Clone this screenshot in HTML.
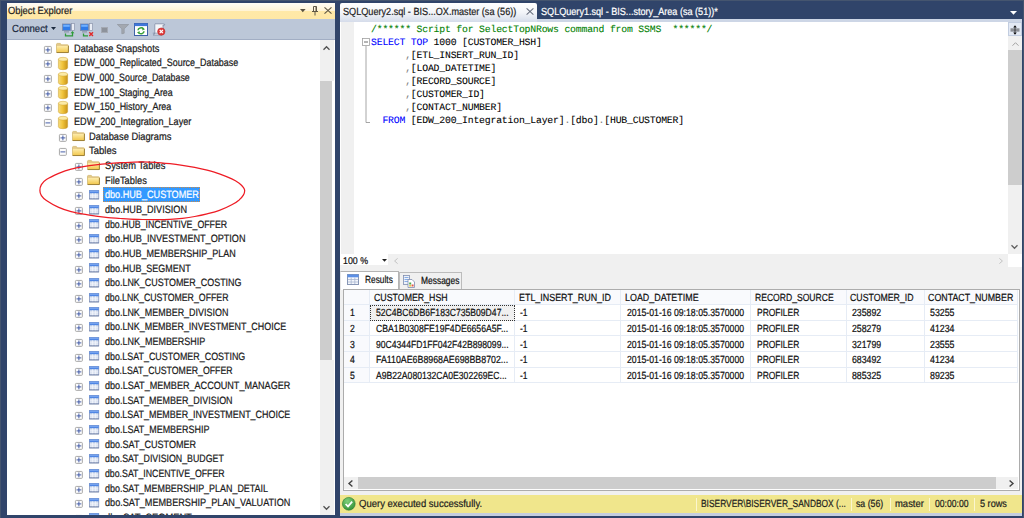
<!DOCTYPE html>
<html lang="en"><head><meta charset="utf-8"><title>Microsoft SQL Server Management Studio</title>
<style>
html,body{margin:0;padding:0}
body{width:1024px;height:518px;overflow:hidden;text-rendering:geometricPrecision;background:#30446a;position:relative;font-family:"Liberation Sans",sans-serif}
.abs,.tx{position:absolute}
.tx{-webkit-text-stroke:0.22px;white-space:nowrap;font-family:"Liberation Sans",sans-serif;transform-origin:0 50%}
.mono{font-family:"Liberation Mono",monospace;-webkit-text-stroke:0.08px}
div{box-sizing:border-box}
svg{display:block;overflow:visible}
.kw{color:#0000ff}.gr{color:#808080}.cm{color:#008000}
</style></head><body>

<div class="abs" style="left:0.00px;top:0.00px;width:1024.00px;height:1.20px;background:#45556f"></div>
<div class="abs" style="left:0.00px;top:0.00px;width:1.00px;height:518.00px;background:#44546e"></div>
<div class="abs" style="left:1023.00px;top:0.00px;width:1.00px;height:518.00px;background:#44546e"></div>
<div id="object-explorer">
<div class="abs" style="left:6.50px;top:3.00px;width:328.00px;height:511.80px;background:#fff"></div>
<div class="abs" style="left:6.50px;top:3.00px;width:328.00px;height:15.50px;background:linear-gradient(#fffdf6 0%,#fff4d6 47%,#ffe9a8 50%,#ffe8a6 100%)"></div>
<div class="abs" style="left:6.50px;top:18.50px;width:328.00px;height:21.30px;background:#bcc7d8;border-bottom:1px solid #a2aec4"></div>
<span id="t1" class="tx" style="left:8.10px;top:5px;font-size:10.4px;line-height:14px;color:#1e1e1e;transform:scaleX(0.8993);">Object Explorer</span>
<svg class="abs" style="left:299.5px;top:8.6px" width="5.6" height="3.4" viewBox="0 0 7 4"><path d="M0 0H7L3.5 4Z" fill="#5a5240"/></svg>
<svg class="abs" style="left:311px;top:6px" width="8" height="10" viewBox="0 0 8 10"><path d="M2.5 0.5H5.5V5.5H2.5ZM1 5.5H7M4 5.5V9.5" fill="none" stroke="#5f5745" stroke-width="1"/><path d="M5 0.5V5.5" stroke="#5f5745" stroke-width="1"/></svg>
<svg class="abs" style="left:323.7px;top:7px" width="8" height="7" viewBox="0 0 8 7"><path d="M0.5 0.3L7.5 6.7M7.5 0.3L0.5 6.7" stroke="#5f5745" stroke-width="1.1"/></svg>
<span id="t2" class="tx" style="left:11.90px;top:23px;font-size:10.4px;line-height:14px;color:#1b293e;transform:scaleX(0.9198);">Connect</span>
<svg class="abs" style="left:51px;top:27px" width="5" height="3" viewBox="0 0 5 3"><path d="M0 0H5L2.5 3Z" fill="#1b293e"/></svg>
<svg class="abs" style="left:62px;top:22.5px" width="14" height="14" viewBox="0 0 14 14"><rect x="0.5" y="1" width="8" height="6.5" fill="#2f7be8" stroke="#7c8aa8" stroke-width="0.8"/><rect x="1.3" y="1.8" width="6.4" height="2" fill="#6fb0ff"/><rect x="2" y="8.3" width="5" height="1.2" fill="#8b95aa"/><rect x="9.5" y="0.5" width="3" height="7" fill="#e9edf5" stroke="#8a94ab" stroke-width="0.7"/><path d="M3.5 10.5V12.8H10.5V9.5" fill="none" stroke="#2e9a3a" stroke-width="1.3"/><path d="M8.6 10.2L10.5 8L12.4 10.2Z" fill="#2e9a3a"/></svg>
<svg class="abs" style="left:80.3px;top:22.5px" width="14" height="14" viewBox="0 0 14 14"><rect x="0.5" y="1" width="8" height="6.5" fill="#2f7be8" stroke="#7c8aa8" stroke-width="0.8"/><rect x="1.3" y="1.8" width="6.4" height="2" fill="#6fb0ff"/><rect x="2" y="8.3" width="5" height="1.2" fill="#8b95aa"/><rect x="9.5" y="0.5" width="3" height="7" fill="#e9edf5" stroke="#8a94ab" stroke-width="0.7"/><path d="M3.5 10.5V12.8H8" fill="none" stroke="#2e9a3a" stroke-width="1.3"/><path d="M9.3 9.3L13 13M13 9.3L9.3 13" stroke="#e02a2a" stroke-width="1.4"/></svg>
<div class="abs" style="left:101.00px;top:26.60px;width:7.00px;height:6.40px;background:#8d929b;border:1px solid #a4a9b3"></div>
<svg class="abs" style="left:117px;top:24px" width="12" height="10" viewBox="0 0 12 10"><path d="M0.3 0.5H11.7L7.2 4.8V9.2L4.8 9.8V4.8Z" fill="#a3a8b0" stroke="#8c9199" stroke-width="0.6"/></svg>
<svg class="abs" style="left:133.7px;top:22.8px" width="14" height="13" viewBox="0 0 14 13"><rect x="0.5" y="0.5" width="13" height="12" fill="#fff" stroke="#3e62a8" stroke-width="1"/><rect x="0.5" y="0.5" width="13" height="2.6" fill="#3f77d9"/><path d="M4 7.3A3 2.6 0 0 1 9.5 6" fill="none" stroke="#3ba13a" stroke-width="1.5"/><path d="M8.3 4.3L11 6.2L8.4 7.6Z" fill="#3ba13a"/><path d="M10 8.2A3 2.6 0 0 1 4.5 9.6" fill="none" stroke="#3ba13a" stroke-width="1.5"/><path d="M5.7 11.3L3 9.4L5.6 8Z" fill="#3ba13a"/></svg>
<svg class="abs" style="left:152px;top:22.8px" width="14" height="13" viewBox="0 0 14 13"><path d="M3 0.8H11.5Q12.8 0.8 12.8 2H11V10.5Q11 12 9.5 12H1.2Q2.8 11.6 2.8 10V1.5Z" fill="#f4f6fa" stroke="#7f8aa3" stroke-width="0.8"/><path d="M0.8 10.2H8.5" stroke="#7f8aa3" stroke-width="0.8"/><circle cx="9.3" cy="8.6" r="3.7" fill="#e13b3b" stroke="#b32020" stroke-width="0.5"/><path d="M7.7 7L10.9 10.2M10.9 7L7.7 10.2" stroke="#fff" stroke-width="1.2"/></svg>
<div class="abs" style="left:320.30px;top:39.80px;width:13.70px;height:475.00px;background:#f0f0f0"></div>
<div class="abs" style="left:320.30px;top:81.40px;width:13.70px;height:278.60px;background:#fff"></div>
<div class="abs" style="left:320.30px;top:81.40px;width:12.10px;height:278.60px;background:#cdcdcd"></div>
<svg class="abs" style="left:323.3px;top:46.2px" width="7" height="4" viewBox="0 0 7 4"><path d="M0.5 3.7L3.5 0.7L6.5 3.7" fill="none" stroke="#505050" stroke-width="1.3"/></svg>
<svg class="abs" style="left:323.3px;top:506.3px" width="7" height="4" viewBox="0 0 7 4"><path d="M0.5 0.3L3.5 3.3L6.5 0.3" fill="none" stroke="#505050" stroke-width="1.3"/></svg>
<svg width="0" height="0" style="position:absolute"><defs><linearGradient id="cyl" x1="0" x2="1"><stop offset="0" stop-color="#f7dc7a"/><stop offset=".45" stop-color="#f0c43c"/><stop offset="1" stop-color="#c99418"/></linearGradient><linearGradient id="fld" x1="0" x2="0" y1="0" y2="1"><stop offset="0" stop-color="#fdecab"/><stop offset="1" stop-color="#f2c84f"/></linearGradient></defs></svg>
<div id="tree">
<svg class="abs" style="left:43.90px;top:45.70px" width="7.8" height="7.8" viewBox="0 0 9 9"><rect x="0.5" y="0.5" width="8" height="8" rx="1" fill="#fcfcfc" stroke="#9b9b9b"/><path d="M1.7 4.5h5.6" stroke="#3550a0" stroke-width="1.05"/><path d="M4.5 1.7v5.6" stroke="#3550a0" stroke-width="1.05"/></svg>
<svg class="abs" style="left:56.30px;top:43.20px" width="13" height="10" viewBox="0 0 13 10"><path d="M0.5 1.3 Q0.5 0.4 1.5 0.4 H4.3 L5.3 1.8 H11.5 Q12.5 1.8 12.5 2.8 V9 Q12.5 9.6 12 9.6 H1 Q0.5 9.6 0.5 9 Z" fill="#e3c98a" stroke="#c9ab55" stroke-width="0.6"/><path d="M0.9 2.9 H12 V9.2 H0.9 Z" fill="url(#fld)"/><path d="M0.6 9.5H12.4V3" fill="none" stroke="#8d6f24" stroke-width="0.9" opacity=".85"/></svg>
<span id="t3" class="tx" style="left:73.70px;top:42px;font-size:10.6px;line-height:14px;color:#1a1a1a;transform:scaleX(0.8672);">Database Snapshots</span>
<svg class="abs" style="left:43.90px;top:60.36px" width="7.8" height="7.8" viewBox="0 0 9 9"><rect x="0.5" y="0.5" width="8" height="8" rx="1" fill="#fcfcfc" stroke="#9b9b9b"/><path d="M1.7 4.5h5.6" stroke="#3550a0" stroke-width="1.05"/><path d="M4.5 1.7v5.6" stroke="#3550a0" stroke-width="1.05"/></svg>
<svg class="abs" style="left:58.00px;top:56.86px" width="10" height="13" viewBox="0 0 10 13"><path d="M0.4 2.2 V10.8 A4.6 1.9 0 0 0 9.6 10.8 V2.2 Z" fill="url(#cyl)" stroke="#c79a2a" stroke-width="0.5"/><ellipse cx="5" cy="2.2" rx="4.6" ry="1.9" fill="#fbeaa6" stroke="#d2a93a" stroke-width="0.5"/></svg>
<span id="t4" class="tx" style="left:73.70px;top:56px;font-size:10.6px;line-height:14px;color:#1a1a1a;transform:scaleX(0.8423);">EDW_000_Replicated_Source_Database</span>
<svg class="abs" style="left:43.90px;top:75.02px" width="7.8" height="7.8" viewBox="0 0 9 9"><rect x="0.5" y="0.5" width="8" height="8" rx="1" fill="#fcfcfc" stroke="#9b9b9b"/><path d="M1.7 4.5h5.6" stroke="#3550a0" stroke-width="1.05"/><path d="M4.5 1.7v5.6" stroke="#3550a0" stroke-width="1.05"/></svg>
<svg class="abs" style="left:58.00px;top:71.52px" width="10" height="13" viewBox="0 0 10 13"><path d="M0.4 2.2 V10.8 A4.6 1.9 0 0 0 9.6 10.8 V2.2 Z" fill="url(#cyl)" stroke="#c79a2a" stroke-width="0.5"/><ellipse cx="5" cy="2.2" rx="4.6" ry="1.9" fill="#fbeaa6" stroke="#d2a93a" stroke-width="0.5"/></svg>
<span id="t5" class="tx" style="left:73.70px;top:71px;font-size:10.6px;line-height:14px;color:#1a1a1a;transform:scaleX(0.8325);">EDW_000_Source_Database</span>
<svg class="abs" style="left:43.90px;top:89.68px" width="7.8" height="7.8" viewBox="0 0 9 9"><rect x="0.5" y="0.5" width="8" height="8" rx="1" fill="#fcfcfc" stroke="#9b9b9b"/><path d="M1.7 4.5h5.6" stroke="#3550a0" stroke-width="1.05"/><path d="M4.5 1.7v5.6" stroke="#3550a0" stroke-width="1.05"/></svg>
<svg class="abs" style="left:58.00px;top:86.18px" width="10" height="13" viewBox="0 0 10 13"><path d="M0.4 2.2 V10.8 A4.6 1.9 0 0 0 9.6 10.8 V2.2 Z" fill="url(#cyl)" stroke="#c79a2a" stroke-width="0.5"/><ellipse cx="5" cy="2.2" rx="4.6" ry="1.9" fill="#fbeaa6" stroke="#d2a93a" stroke-width="0.5"/></svg>
<span id="t6" class="tx" style="left:73.70px;top:86px;font-size:10.6px;line-height:14px;color:#1a1a1a;transform:scaleX(0.8338);">EDW_100_Staging_Area</span>
<svg class="abs" style="left:43.90px;top:104.34px" width="7.8" height="7.8" viewBox="0 0 9 9"><rect x="0.5" y="0.5" width="8" height="8" rx="1" fill="#fcfcfc" stroke="#9b9b9b"/><path d="M1.7 4.5h5.6" stroke="#3550a0" stroke-width="1.05"/><path d="M4.5 1.7v5.6" stroke="#3550a0" stroke-width="1.05"/></svg>
<svg class="abs" style="left:58.00px;top:100.84px" width="10" height="13" viewBox="0 0 10 13"><path d="M0.4 2.2 V10.8 A4.6 1.9 0 0 0 9.6 10.8 V2.2 Z" fill="url(#cyl)" stroke="#c79a2a" stroke-width="0.5"/><ellipse cx="5" cy="2.2" rx="4.6" ry="1.9" fill="#fbeaa6" stroke="#d2a93a" stroke-width="0.5"/></svg>
<span id="t7" class="tx" style="left:73.70px;top:100px;font-size:10.6px;line-height:14px;color:#1a1a1a;transform:scaleX(0.8431);">EDW_150_History_Area</span>
<svg class="abs" style="left:43.90px;top:119.00px" width="7.8" height="7.8" viewBox="0 0 9 9"><rect x="0.5" y="0.5" width="8" height="8" rx="1" fill="#fcfcfc" stroke="#9b9b9b"/><path d="M1.7 4.5h5.6" stroke="#3550a0" stroke-width="1.05"/></svg>
<svg class="abs" style="left:58.00px;top:115.50px" width="10" height="13" viewBox="0 0 10 13"><path d="M0.4 2.2 V10.8 A4.6 1.9 0 0 0 9.6 10.8 V2.2 Z" fill="url(#cyl)" stroke="#c79a2a" stroke-width="0.5"/><ellipse cx="5" cy="2.2" rx="4.6" ry="1.9" fill="#fbeaa6" stroke="#d2a93a" stroke-width="0.5"/></svg>
<span id="t8" class="tx" style="left:73.70px;top:115px;font-size:10.6px;line-height:14px;color:#1a1a1a;transform:scaleX(0.8585);">EDW_200_Integration_Layer</span>
<svg class="abs" style="left:59.30px;top:133.66px" width="7.8" height="7.8" viewBox="0 0 9 9"><rect x="0.5" y="0.5" width="8" height="8" rx="1" fill="#fcfcfc" stroke="#9b9b9b"/><path d="M1.7 4.5h5.6" stroke="#3550a0" stroke-width="1.05"/><path d="M4.5 1.7v5.6" stroke="#3550a0" stroke-width="1.05"/></svg>
<svg class="abs" style="left:71.70px;top:131.16px" width="13" height="10" viewBox="0 0 13 10"><path d="M0.5 1.3 Q0.5 0.4 1.5 0.4 H4.3 L5.3 1.8 H11.5 Q12.5 1.8 12.5 2.8 V9 Q12.5 9.6 12 9.6 H1 Q0.5 9.6 0.5 9 Z" fill="#e3c98a" stroke="#c9ab55" stroke-width="0.6"/><path d="M0.9 2.9 H12 V9.2 H0.9 Z" fill="url(#fld)"/><path d="M0.6 9.5H12.4V3" fill="none" stroke="#8d6f24" stroke-width="0.9" opacity=".85"/></svg>
<span id="t9" class="tx" style="left:89.10px;top:130px;font-size:10.6px;line-height:14px;color:#1a1a1a;transform:scaleX(0.8790);">Database Diagrams</span>
<svg class="abs" style="left:59.30px;top:148.32px" width="7.8" height="7.8" viewBox="0 0 9 9"><rect x="0.5" y="0.5" width="8" height="8" rx="1" fill="#fcfcfc" stroke="#9b9b9b"/><path d="M1.7 4.5h5.6" stroke="#3550a0" stroke-width="1.05"/></svg>
<svg class="abs" style="left:71.70px;top:145.82px" width="13" height="10" viewBox="0 0 13 10"><path d="M0.5 1.3 Q0.5 0.4 1.5 0.4 H4.3 L5.3 1.8 H11.5 Q12.5 1.8 12.5 2.8 V9 Q12.5 9.6 12 9.6 H1 Q0.5 9.6 0.5 9 Z" fill="#e3c98a" stroke="#c9ab55" stroke-width="0.6"/><path d="M0.9 2.9 H12 V9.2 H0.9 Z" fill="url(#fld)"/><path d="M0.6 9.5H12.4V3" fill="none" stroke="#8d6f24" stroke-width="0.9" opacity=".85"/></svg>
<span id="t10" class="tx" style="left:89.10px;top:144px;font-size:10.6px;line-height:14px;color:#1a1a1a;transform:scaleX(0.8980);">Tables</span>
<svg class="abs" style="left:74.70px;top:162.98px" width="7.8" height="7.8" viewBox="0 0 9 9"><rect x="0.5" y="0.5" width="8" height="8" rx="1" fill="#fcfcfc" stroke="#9b9b9b"/><path d="M1.7 4.5h5.6" stroke="#3550a0" stroke-width="1.05"/><path d="M4.5 1.7v5.6" stroke="#3550a0" stroke-width="1.05"/></svg>
<svg class="abs" style="left:87.10px;top:160.48px" width="13" height="10" viewBox="0 0 13 10"><path d="M0.5 1.3 Q0.5 0.4 1.5 0.4 H4.3 L5.3 1.8 H11.5 Q12.5 1.8 12.5 2.8 V9 Q12.5 9.6 12 9.6 H1 Q0.5 9.6 0.5 9 Z" fill="#e3c98a" stroke="#c9ab55" stroke-width="0.6"/><path d="M0.9 2.9 H12 V9.2 H0.9 Z" fill="url(#fld)"/><path d="M0.6 9.5H12.4V3" fill="none" stroke="#8d6f24" stroke-width="0.9" opacity=".85"/></svg>
<span id="t11" class="tx" style="left:104.70px;top:159px;font-size:10.6px;line-height:14px;color:#1a1a1a;transform:scaleX(0.8777);">System Tables</span>
<svg class="abs" style="left:74.70px;top:177.64px" width="7.8" height="7.8" viewBox="0 0 9 9"><rect x="0.5" y="0.5" width="8" height="8" rx="1" fill="#fcfcfc" stroke="#9b9b9b"/><path d="M1.7 4.5h5.6" stroke="#3550a0" stroke-width="1.05"/><path d="M4.5 1.7v5.6" stroke="#3550a0" stroke-width="1.05"/></svg>
<svg class="abs" style="left:87.10px;top:175.14px" width="13" height="10" viewBox="0 0 13 10"><path d="M0.5 1.3 Q0.5 0.4 1.5 0.4 H4.3 L5.3 1.8 H11.5 Q12.5 1.8 12.5 2.8 V9 Q12.5 9.6 12 9.6 H1 Q0.5 9.6 0.5 9 Z" fill="#e3c98a" stroke="#c9ab55" stroke-width="0.6"/><path d="M0.9 2.9 H12 V9.2 H0.9 Z" fill="url(#fld)"/><path d="M0.6 9.5H12.4V3" fill="none" stroke="#8d6f24" stroke-width="0.9" opacity=".85"/></svg>
<span id="t12" class="tx" style="left:104.70px;top:174px;font-size:10.6px;line-height:14px;color:#1a1a1a;transform:scaleX(0.8763);">FileTables</span>
<svg class="abs" style="left:74.70px;top:192.30px" width="7.8" height="7.8" viewBox="0 0 9 9"><rect x="0.5" y="0.5" width="8" height="8" rx="1" fill="#fcfcfc" stroke="#9b9b9b"/><path d="M1.7 4.5h5.6" stroke="#3550a0" stroke-width="1.05"/><path d="M4.5 1.7v5.6" stroke="#3550a0" stroke-width="1.05"/></svg>
<svg class="abs" style="left:89.00px;top:190.00px" width="10.2" height="9.3" viewBox="0 0 11 10"><rect x="0.5" y="0.5" width="10" height="9" fill="#d3dcec" stroke="#8798bd" stroke-width="0.9"/><rect x="0.5" y="0.5" width="10" height="3" fill="#4f86e4"/><rect x="0.8" y="0.8" width="9.4" height="1.2" fill="#7ba7f0"/><path d="M1 5.6H10M1 7.6H10M3.8 3.6V9M7.1 3.6V9" stroke="#f4f7fc" stroke-width="0.8"/><path d="M0.3 9.7H10.7" stroke="#6f7fa3" stroke-width="0.8"/></svg>
<div class="abs" style="left:103.30px;top:187.00px;width:96.40px;height:14.60px;background:#3399ff;border:1px dotted #c98a4a"></div>
<span id="t13" class="tx" style="left:104.70px;top:188px;font-size:10.6px;line-height:14px;color:#fff;transform:scaleX(0.8590);">dbo.HUB_CUSTOMER</span>
<svg class="abs" style="left:74.70px;top:206.96px" width="7.8" height="7.8" viewBox="0 0 9 9"><rect x="0.5" y="0.5" width="8" height="8" rx="1" fill="#fcfcfc" stroke="#9b9b9b"/><path d="M1.7 4.5h5.6" stroke="#3550a0" stroke-width="1.05"/><path d="M4.5 1.7v5.6" stroke="#3550a0" stroke-width="1.05"/></svg>
<svg class="abs" style="left:89.00px;top:204.66px" width="10.2" height="9.3" viewBox="0 0 11 10"><rect x="0.5" y="0.5" width="10" height="9" fill="#d3dcec" stroke="#8798bd" stroke-width="0.9"/><rect x="0.5" y="0.5" width="10" height="3" fill="#4f86e4"/><rect x="0.8" y="0.8" width="9.4" height="1.2" fill="#7ba7f0"/><path d="M1 5.6H10M1 7.6H10M3.8 3.6V9M7.1 3.6V9" stroke="#f4f7fc" stroke-width="0.8"/><path d="M0.3 9.7H10.7" stroke="#6f7fa3" stroke-width="0.8"/></svg>
<span id="t14" class="tx" style="left:104.70px;top:203px;font-size:10.6px;line-height:14px;color:#1a1a1a;transform:scaleX(0.8596);">dbo.HUB_DIVISION</span>
<svg class="abs" style="left:74.70px;top:221.62px" width="7.8" height="7.8" viewBox="0 0 9 9"><rect x="0.5" y="0.5" width="8" height="8" rx="1" fill="#fcfcfc" stroke="#9b9b9b"/><path d="M1.7 4.5h5.6" stroke="#3550a0" stroke-width="1.05"/><path d="M4.5 1.7v5.6" stroke="#3550a0" stroke-width="1.05"/></svg>
<svg class="abs" style="left:89.00px;top:219.32px" width="10.2" height="9.3" viewBox="0 0 11 10"><rect x="0.5" y="0.5" width="10" height="9" fill="#d3dcec" stroke="#8798bd" stroke-width="0.9"/><rect x="0.5" y="0.5" width="10" height="3" fill="#4f86e4"/><rect x="0.8" y="0.8" width="9.4" height="1.2" fill="#7ba7f0"/><path d="M1 5.6H10M1 7.6H10M3.8 3.6V9M7.1 3.6V9" stroke="#f4f7fc" stroke-width="0.8"/><path d="M0.3 9.7H10.7" stroke="#6f7fa3" stroke-width="0.8"/></svg>
<span id="t15" class="tx" style="left:104.70px;top:218px;font-size:10.6px;line-height:14px;color:#1a1a1a;transform:scaleX(0.8302);">dbo.HUB_INCENTIVE_OFFER</span>
<svg class="abs" style="left:74.70px;top:236.28px" width="7.8" height="7.8" viewBox="0 0 9 9"><rect x="0.5" y="0.5" width="8" height="8" rx="1" fill="#fcfcfc" stroke="#9b9b9b"/><path d="M1.7 4.5h5.6" stroke="#3550a0" stroke-width="1.05"/><path d="M4.5 1.7v5.6" stroke="#3550a0" stroke-width="1.05"/></svg>
<svg class="abs" style="left:89.00px;top:233.98px" width="10.2" height="9.3" viewBox="0 0 11 10"><rect x="0.5" y="0.5" width="10" height="9" fill="#d3dcec" stroke="#8798bd" stroke-width="0.9"/><rect x="0.5" y="0.5" width="10" height="3" fill="#4f86e4"/><rect x="0.8" y="0.8" width="9.4" height="1.2" fill="#7ba7f0"/><path d="M1 5.6H10M1 7.6H10M3.8 3.6V9M7.1 3.6V9" stroke="#f4f7fc" stroke-width="0.8"/><path d="M0.3 9.7H10.7" stroke="#6f7fa3" stroke-width="0.8"/></svg>
<span id="t16" class="tx" style="left:104.70px;top:232px;font-size:10.6px;line-height:14px;color:#1a1a1a;transform:scaleX(0.8585);">dbo.HUB_INVESTMENT_OPTION</span>
<svg class="abs" style="left:74.70px;top:250.94px" width="7.8" height="7.8" viewBox="0 0 9 9"><rect x="0.5" y="0.5" width="8" height="8" rx="1" fill="#fcfcfc" stroke="#9b9b9b"/><path d="M1.7 4.5h5.6" stroke="#3550a0" stroke-width="1.05"/><path d="M4.5 1.7v5.6" stroke="#3550a0" stroke-width="1.05"/></svg>
<svg class="abs" style="left:89.00px;top:248.64px" width="10.2" height="9.3" viewBox="0 0 11 10"><rect x="0.5" y="0.5" width="10" height="9" fill="#d3dcec" stroke="#8798bd" stroke-width="0.9"/><rect x="0.5" y="0.5" width="10" height="3" fill="#4f86e4"/><rect x="0.8" y="0.8" width="9.4" height="1.2" fill="#7ba7f0"/><path d="M1 5.6H10M1 7.6H10M3.8 3.6V9M7.1 3.6V9" stroke="#f4f7fc" stroke-width="0.8"/><path d="M0.3 9.7H10.7" stroke="#6f7fa3" stroke-width="0.8"/></svg>
<span id="t17" class="tx" style="left:104.70px;top:247px;font-size:10.6px;line-height:14px;color:#1a1a1a;transform:scaleX(0.8512);">dbo.HUB_MEMBERSHIP_PLAN</span>
<svg class="abs" style="left:74.70px;top:265.60px" width="7.8" height="7.8" viewBox="0 0 9 9"><rect x="0.5" y="0.5" width="8" height="8" rx="1" fill="#fcfcfc" stroke="#9b9b9b"/><path d="M1.7 4.5h5.6" stroke="#3550a0" stroke-width="1.05"/><path d="M4.5 1.7v5.6" stroke="#3550a0" stroke-width="1.05"/></svg>
<svg class="abs" style="left:89.00px;top:263.30px" width="10.2" height="9.3" viewBox="0 0 11 10"><rect x="0.5" y="0.5" width="10" height="9" fill="#d3dcec" stroke="#8798bd" stroke-width="0.9"/><rect x="0.5" y="0.5" width="10" height="3" fill="#4f86e4"/><rect x="0.8" y="0.8" width="9.4" height="1.2" fill="#7ba7f0"/><path d="M1 5.6H10M1 7.6H10M3.8 3.6V9M7.1 3.6V9" stroke="#f4f7fc" stroke-width="0.8"/><path d="M0.3 9.7H10.7" stroke="#6f7fa3" stroke-width="0.8"/></svg>
<span id="t18" class="tx" style="left:104.70px;top:262px;font-size:10.6px;line-height:14px;color:#1a1a1a;transform:scaleX(0.8463);">dbo.HUB_SEGMENT</span>
<svg class="abs" style="left:74.70px;top:280.26px" width="7.8" height="7.8" viewBox="0 0 9 9"><rect x="0.5" y="0.5" width="8" height="8" rx="1" fill="#fcfcfc" stroke="#9b9b9b"/><path d="M1.7 4.5h5.6" stroke="#3550a0" stroke-width="1.05"/><path d="M4.5 1.7v5.6" stroke="#3550a0" stroke-width="1.05"/></svg>
<svg class="abs" style="left:89.00px;top:277.96px" width="10.2" height="9.3" viewBox="0 0 11 10"><rect x="0.5" y="0.5" width="10" height="9" fill="#d3dcec" stroke="#8798bd" stroke-width="0.9"/><rect x="0.5" y="0.5" width="10" height="3" fill="#4f86e4"/><rect x="0.8" y="0.8" width="9.4" height="1.2" fill="#7ba7f0"/><path d="M1 5.6H10M1 7.6H10M3.8 3.6V9M7.1 3.6V9" stroke="#f4f7fc" stroke-width="0.8"/><path d="M0.3 9.7H10.7" stroke="#6f7fa3" stroke-width="0.8"/></svg>
<span id="t19" class="tx" style="left:104.70px;top:276px;font-size:10.6px;line-height:14px;color:#1a1a1a;transform:scaleX(0.8441);">dbo.LNK_CUSTOMER_COSTING</span>
<svg class="abs" style="left:74.70px;top:294.92px" width="7.8" height="7.8" viewBox="0 0 9 9"><rect x="0.5" y="0.5" width="8" height="8" rx="1" fill="#fcfcfc" stroke="#9b9b9b"/><path d="M1.7 4.5h5.6" stroke="#3550a0" stroke-width="1.05"/><path d="M4.5 1.7v5.6" stroke="#3550a0" stroke-width="1.05"/></svg>
<svg class="abs" style="left:89.00px;top:292.62px" width="10.2" height="9.3" viewBox="0 0 11 10"><rect x="0.5" y="0.5" width="10" height="9" fill="#d3dcec" stroke="#8798bd" stroke-width="0.9"/><rect x="0.5" y="0.5" width="10" height="3" fill="#4f86e4"/><rect x="0.8" y="0.8" width="9.4" height="1.2" fill="#7ba7f0"/><path d="M1 5.6H10M1 7.6H10M3.8 3.6V9M7.1 3.6V9" stroke="#f4f7fc" stroke-width="0.8"/><path d="M0.3 9.7H10.7" stroke="#6f7fa3" stroke-width="0.8"/></svg>
<span id="t20" class="tx" style="left:104.70px;top:291px;font-size:10.6px;line-height:14px;color:#1a1a1a;transform:scaleX(0.8270);">dbo.LNK_CUSTOMER_OFFER</span>
<svg class="abs" style="left:74.70px;top:309.58px" width="7.8" height="7.8" viewBox="0 0 9 9"><rect x="0.5" y="0.5" width="8" height="8" rx="1" fill="#fcfcfc" stroke="#9b9b9b"/><path d="M1.7 4.5h5.6" stroke="#3550a0" stroke-width="1.05"/><path d="M4.5 1.7v5.6" stroke="#3550a0" stroke-width="1.05"/></svg>
<svg class="abs" style="left:89.00px;top:307.28px" width="10.2" height="9.3" viewBox="0 0 11 10"><rect x="0.5" y="0.5" width="10" height="9" fill="#d3dcec" stroke="#8798bd" stroke-width="0.9"/><rect x="0.5" y="0.5" width="10" height="3" fill="#4f86e4"/><rect x="0.8" y="0.8" width="9.4" height="1.2" fill="#7ba7f0"/><path d="M1 5.6H10M1 7.6H10M3.8 3.6V9M7.1 3.6V9" stroke="#f4f7fc" stroke-width="0.8"/><path d="M0.3 9.7H10.7" stroke="#6f7fa3" stroke-width="0.8"/></svg>
<span id="t21" class="tx" style="left:104.70px;top:306px;font-size:10.6px;line-height:14px;color:#1a1a1a;transform:scaleX(0.8451);">dbo.LNK_MEMBER_DIVISION</span>
<svg class="abs" style="left:74.70px;top:324.24px" width="7.8" height="7.8" viewBox="0 0 9 9"><rect x="0.5" y="0.5" width="8" height="8" rx="1" fill="#fcfcfc" stroke="#9b9b9b"/><path d="M1.7 4.5h5.6" stroke="#3550a0" stroke-width="1.05"/><path d="M4.5 1.7v5.6" stroke="#3550a0" stroke-width="1.05"/></svg>
<svg class="abs" style="left:89.00px;top:321.94px" width="10.2" height="9.3" viewBox="0 0 11 10"><rect x="0.5" y="0.5" width="10" height="9" fill="#d3dcec" stroke="#8798bd" stroke-width="0.9"/><rect x="0.5" y="0.5" width="10" height="3" fill="#4f86e4"/><rect x="0.8" y="0.8" width="9.4" height="1.2" fill="#7ba7f0"/><path d="M1 5.6H10M1 7.6H10M3.8 3.6V9M7.1 3.6V9" stroke="#f4f7fc" stroke-width="0.8"/><path d="M0.3 9.7H10.7" stroke="#6f7fa3" stroke-width="0.8"/></svg>
<span id="t22" class="tx" style="left:104.70px;top:320px;font-size:10.6px;line-height:14px;color:#1a1a1a;transform:scaleX(0.8428);">dbo.LNK_MEMBER_INVESTMENT_CHOICE</span>
<svg class="abs" style="left:74.70px;top:338.90px" width="7.8" height="7.8" viewBox="0 0 9 9"><rect x="0.5" y="0.5" width="8" height="8" rx="1" fill="#fcfcfc" stroke="#9b9b9b"/><path d="M1.7 4.5h5.6" stroke="#3550a0" stroke-width="1.05"/><path d="M4.5 1.7v5.6" stroke="#3550a0" stroke-width="1.05"/></svg>
<svg class="abs" style="left:89.00px;top:336.60px" width="10.2" height="9.3" viewBox="0 0 11 10"><rect x="0.5" y="0.5" width="10" height="9" fill="#d3dcec" stroke="#8798bd" stroke-width="0.9"/><rect x="0.5" y="0.5" width="10" height="3" fill="#4f86e4"/><rect x="0.8" y="0.8" width="9.4" height="1.2" fill="#7ba7f0"/><path d="M1 5.6H10M1 7.6H10M3.8 3.6V9M7.1 3.6V9" stroke="#f4f7fc" stroke-width="0.8"/><path d="M0.3 9.7H10.7" stroke="#6f7fa3" stroke-width="0.8"/></svg>
<span id="t23" class="tx" style="left:104.70px;top:335px;font-size:10.6px;line-height:14px;color:#1a1a1a;transform:scaleX(0.8475);">dbo.LNK_MEMBERSHIP</span>
<svg class="abs" style="left:74.70px;top:353.56px" width="7.8" height="7.8" viewBox="0 0 9 9"><rect x="0.5" y="0.5" width="8" height="8" rx="1" fill="#fcfcfc" stroke="#9b9b9b"/><path d="M1.7 4.5h5.6" stroke="#3550a0" stroke-width="1.05"/><path d="M4.5 1.7v5.6" stroke="#3550a0" stroke-width="1.05"/></svg>
<svg class="abs" style="left:89.00px;top:351.26px" width="10.2" height="9.3" viewBox="0 0 11 10"><rect x="0.5" y="0.5" width="10" height="9" fill="#d3dcec" stroke="#8798bd" stroke-width="0.9"/><rect x="0.5" y="0.5" width="10" height="3" fill="#4f86e4"/><rect x="0.8" y="0.8" width="9.4" height="1.2" fill="#7ba7f0"/><path d="M1 5.6H10M1 7.6H10M3.8 3.6V9M7.1 3.6V9" stroke="#f4f7fc" stroke-width="0.8"/><path d="M0.3 9.7H10.7" stroke="#6f7fa3" stroke-width="0.8"/></svg>
<span id="t24" class="tx" style="left:104.70px;top:350px;font-size:10.6px;line-height:14px;color:#1a1a1a;transform:scaleX(0.8411);">dbo.LSAT_CUSTOMER_COSTING</span>
<svg class="abs" style="left:74.70px;top:368.22px" width="7.8" height="7.8" viewBox="0 0 9 9"><rect x="0.5" y="0.5" width="8" height="8" rx="1" fill="#fcfcfc" stroke="#9b9b9b"/><path d="M1.7 4.5h5.6" stroke="#3550a0" stroke-width="1.05"/><path d="M4.5 1.7v5.6" stroke="#3550a0" stroke-width="1.05"/></svg>
<svg class="abs" style="left:89.00px;top:365.92px" width="10.2" height="9.3" viewBox="0 0 11 10"><rect x="0.5" y="0.5" width="10" height="9" fill="#d3dcec" stroke="#8798bd" stroke-width="0.9"/><rect x="0.5" y="0.5" width="10" height="3" fill="#4f86e4"/><rect x="0.8" y="0.8" width="9.4" height="1.2" fill="#7ba7f0"/><path d="M1 5.6H10M1 7.6H10M3.8 3.6V9M7.1 3.6V9" stroke="#f4f7fc" stroke-width="0.8"/><path d="M0.3 9.7H10.7" stroke="#6f7fa3" stroke-width="0.8"/></svg>
<span id="t25" class="tx" style="left:104.70px;top:364px;font-size:10.6px;line-height:14px;color:#1a1a1a;transform:scaleX(0.8262);">dbo.LSAT_CUSTOMER_OFFER</span>
<svg class="abs" style="left:74.70px;top:382.88px" width="7.8" height="7.8" viewBox="0 0 9 9"><rect x="0.5" y="0.5" width="8" height="8" rx="1" fill="#fcfcfc" stroke="#9b9b9b"/><path d="M1.7 4.5h5.6" stroke="#3550a0" stroke-width="1.05"/><path d="M4.5 1.7v5.6" stroke="#3550a0" stroke-width="1.05"/></svg>
<svg class="abs" style="left:89.00px;top:380.58px" width="10.2" height="9.3" viewBox="0 0 11 10"><rect x="0.5" y="0.5" width="10" height="9" fill="#d3dcec" stroke="#8798bd" stroke-width="0.9"/><rect x="0.5" y="0.5" width="10" height="3" fill="#4f86e4"/><rect x="0.8" y="0.8" width="9.4" height="1.2" fill="#7ba7f0"/><path d="M1 5.6H10M1 7.6H10M3.8 3.6V9M7.1 3.6V9" stroke="#f4f7fc" stroke-width="0.8"/><path d="M0.3 9.7H10.7" stroke="#6f7fa3" stroke-width="0.8"/></svg>
<span id="t26" class="tx" style="left:104.70px;top:379px;font-size:10.6px;line-height:14px;color:#1a1a1a;transform:scaleX(0.8561);">dbo.LSAT_MEMBER_ACCOUNT_MANAGER</span>
<svg class="abs" style="left:74.70px;top:397.54px" width="7.8" height="7.8" viewBox="0 0 9 9"><rect x="0.5" y="0.5" width="8" height="8" rx="1" fill="#fcfcfc" stroke="#9b9b9b"/><path d="M1.7 4.5h5.6" stroke="#3550a0" stroke-width="1.05"/><path d="M4.5 1.7v5.6" stroke="#3550a0" stroke-width="1.05"/></svg>
<svg class="abs" style="left:89.00px;top:395.24px" width="10.2" height="9.3" viewBox="0 0 11 10"><rect x="0.5" y="0.5" width="10" height="9" fill="#d3dcec" stroke="#8798bd" stroke-width="0.9"/><rect x="0.5" y="0.5" width="10" height="3" fill="#4f86e4"/><rect x="0.8" y="0.8" width="9.4" height="1.2" fill="#7ba7f0"/><path d="M1 5.6H10M1 7.6H10M3.8 3.6V9M7.1 3.6V9" stroke="#f4f7fc" stroke-width="0.8"/><path d="M0.3 9.7H10.7" stroke="#6f7fa3" stroke-width="0.8"/></svg>
<span id="t27" class="tx" style="left:104.70px;top:394px;font-size:10.6px;line-height:14px;color:#1a1a1a;transform:scaleX(0.8443);">dbo.LSAT_MEMBER_DIVISION</span>
<svg class="abs" style="left:74.70px;top:412.20px" width="7.8" height="7.8" viewBox="0 0 9 9"><rect x="0.5" y="0.5" width="8" height="8" rx="1" fill="#fcfcfc" stroke="#9b9b9b"/><path d="M1.7 4.5h5.6" stroke="#3550a0" stroke-width="1.05"/><path d="M4.5 1.7v5.6" stroke="#3550a0" stroke-width="1.05"/></svg>
<svg class="abs" style="left:89.00px;top:409.90px" width="10.2" height="9.3" viewBox="0 0 11 10"><rect x="0.5" y="0.5" width="10" height="9" fill="#d3dcec" stroke="#8798bd" stroke-width="0.9"/><rect x="0.5" y="0.5" width="10" height="3" fill="#4f86e4"/><rect x="0.8" y="0.8" width="9.4" height="1.2" fill="#7ba7f0"/><path d="M1 5.6H10M1 7.6H10M3.8 3.6V9M7.1 3.6V9" stroke="#f4f7fc" stroke-width="0.8"/><path d="M0.3 9.7H10.7" stroke="#6f7fa3" stroke-width="0.8"/></svg>
<span id="t28" class="tx" style="left:104.70px;top:408px;font-size:10.6px;line-height:14px;color:#1a1a1a;transform:scaleX(0.8423);">dbo.LSAT_MEMBER_INVESTMENT_CHOICE</span>
<svg class="abs" style="left:74.70px;top:426.86px" width="7.8" height="7.8" viewBox="0 0 9 9"><rect x="0.5" y="0.5" width="8" height="8" rx="1" fill="#fcfcfc" stroke="#9b9b9b"/><path d="M1.7 4.5h5.6" stroke="#3550a0" stroke-width="1.05"/><path d="M4.5 1.7v5.6" stroke="#3550a0" stroke-width="1.05"/></svg>
<svg class="abs" style="left:89.00px;top:424.56px" width="10.2" height="9.3" viewBox="0 0 11 10"><rect x="0.5" y="0.5" width="10" height="9" fill="#d3dcec" stroke="#8798bd" stroke-width="0.9"/><rect x="0.5" y="0.5" width="10" height="3" fill="#4f86e4"/><rect x="0.8" y="0.8" width="9.4" height="1.2" fill="#7ba7f0"/><path d="M1 5.6H10M1 7.6H10M3.8 3.6V9M7.1 3.6V9" stroke="#f4f7fc" stroke-width="0.8"/><path d="M0.3 9.7H10.7" stroke="#6f7fa3" stroke-width="0.8"/></svg>
<span id="t29" class="tx" style="left:104.70px;top:423px;font-size:10.6px;line-height:14px;color:#1a1a1a;transform:scaleX(0.8465);">dbo.LSAT_MEMBERSHIP</span>
<svg class="abs" style="left:74.70px;top:441.52px" width="7.8" height="7.8" viewBox="0 0 9 9"><rect x="0.5" y="0.5" width="8" height="8" rx="1" fill="#fcfcfc" stroke="#9b9b9b"/><path d="M1.7 4.5h5.6" stroke="#3550a0" stroke-width="1.05"/><path d="M4.5 1.7v5.6" stroke="#3550a0" stroke-width="1.05"/></svg>
<svg class="abs" style="left:89.00px;top:439.22px" width="10.2" height="9.3" viewBox="0 0 11 10"><rect x="0.5" y="0.5" width="10" height="9" fill="#d3dcec" stroke="#8798bd" stroke-width="0.9"/><rect x="0.5" y="0.5" width="10" height="3" fill="#4f86e4"/><rect x="0.8" y="0.8" width="9.4" height="1.2" fill="#7ba7f0"/><path d="M1 5.6H10M1 7.6H10M3.8 3.6V9M7.1 3.6V9" stroke="#f4f7fc" stroke-width="0.8"/><path d="M0.3 9.7H10.7" stroke="#6f7fa3" stroke-width="0.8"/></svg>
<span id="t30" class="tx" style="left:104.70px;top:438px;font-size:10.6px;line-height:14px;color:#1a1a1a;transform:scaleX(0.8523);">dbo.SAT_CUSTOMER</span>
<svg class="abs" style="left:74.70px;top:456.18px" width="7.8" height="7.8" viewBox="0 0 9 9"><rect x="0.5" y="0.5" width="8" height="8" rx="1" fill="#fcfcfc" stroke="#9b9b9b"/><path d="M1.7 4.5h5.6" stroke="#3550a0" stroke-width="1.05"/><path d="M4.5 1.7v5.6" stroke="#3550a0" stroke-width="1.05"/></svg>
<svg class="abs" style="left:89.00px;top:453.88px" width="10.2" height="9.3" viewBox="0 0 11 10"><rect x="0.5" y="0.5" width="10" height="9" fill="#d3dcec" stroke="#8798bd" stroke-width="0.9"/><rect x="0.5" y="0.5" width="10" height="3" fill="#4f86e4"/><rect x="0.8" y="0.8" width="9.4" height="1.2" fill="#7ba7f0"/><path d="M1 5.6H10M1 7.6H10M3.8 3.6V9M7.1 3.6V9" stroke="#f4f7fc" stroke-width="0.8"/><path d="M0.3 9.7H10.7" stroke="#6f7fa3" stroke-width="0.8"/></svg>
<span id="t31" class="tx" style="left:104.70px;top:452px;font-size:10.6px;line-height:14px;color:#1a1a1a;transform:scaleX(0.8315);">dbo.SAT_DIVISION_BUDGET</span>
<svg class="abs" style="left:74.70px;top:470.84px" width="7.8" height="7.8" viewBox="0 0 9 9"><rect x="0.5" y="0.5" width="8" height="8" rx="1" fill="#fcfcfc" stroke="#9b9b9b"/><path d="M1.7 4.5h5.6" stroke="#3550a0" stroke-width="1.05"/><path d="M4.5 1.7v5.6" stroke="#3550a0" stroke-width="1.05"/></svg>
<svg class="abs" style="left:89.00px;top:468.54px" width="10.2" height="9.3" viewBox="0 0 11 10"><rect x="0.5" y="0.5" width="10" height="9" fill="#d3dcec" stroke="#8798bd" stroke-width="0.9"/><rect x="0.5" y="0.5" width="10" height="3" fill="#4f86e4"/><rect x="0.8" y="0.8" width="9.4" height="1.2" fill="#7ba7f0"/><path d="M1 5.6H10M1 7.6H10M3.8 3.6V9M7.1 3.6V9" stroke="#f4f7fc" stroke-width="0.8"/><path d="M0.3 9.7H10.7" stroke="#6f7fa3" stroke-width="0.8"/></svg>
<span id="t32" class="tx" style="left:104.70px;top:467px;font-size:10.6px;line-height:14px;color:#1a1a1a;transform:scaleX(0.8270);">dbo.SAT_INCENTIVE_OFFER</span>
<svg class="abs" style="left:74.70px;top:485.50px" width="7.8" height="7.8" viewBox="0 0 9 9"><rect x="0.5" y="0.5" width="8" height="8" rx="1" fill="#fcfcfc" stroke="#9b9b9b"/><path d="M1.7 4.5h5.6" stroke="#3550a0" stroke-width="1.05"/><path d="M4.5 1.7v5.6" stroke="#3550a0" stroke-width="1.05"/></svg>
<svg class="abs" style="left:89.00px;top:483.20px" width="10.2" height="9.3" viewBox="0 0 11 10"><rect x="0.5" y="0.5" width="10" height="9" fill="#d3dcec" stroke="#8798bd" stroke-width="0.9"/><rect x="0.5" y="0.5" width="10" height="3" fill="#4f86e4"/><rect x="0.8" y="0.8" width="9.4" height="1.2" fill="#7ba7f0"/><path d="M1 5.6H10M1 7.6H10M3.8 3.6V9M7.1 3.6V9" stroke="#f4f7fc" stroke-width="0.8"/><path d="M0.3 9.7H10.7" stroke="#6f7fa3" stroke-width="0.8"/></svg>
<span id="t33" class="tx" style="left:104.70px;top:482px;font-size:10.6px;line-height:14px;color:#1a1a1a;transform:scaleX(0.8432);">dbo.SAT_MEMBERSHIP_PLAN_DETAIL</span>
<svg class="abs" style="left:74.70px;top:500.16px" width="7.8" height="7.8" viewBox="0 0 9 9"><rect x="0.5" y="0.5" width="8" height="8" rx="1" fill="#fcfcfc" stroke="#9b9b9b"/><path d="M1.7 4.5h5.6" stroke="#3550a0" stroke-width="1.05"/><path d="M4.5 1.7v5.6" stroke="#3550a0" stroke-width="1.05"/></svg>
<svg class="abs" style="left:89.00px;top:497.86px" width="10.2" height="9.3" viewBox="0 0 11 10"><rect x="0.5" y="0.5" width="10" height="9" fill="#d3dcec" stroke="#8798bd" stroke-width="0.9"/><rect x="0.5" y="0.5" width="10" height="3" fill="#4f86e4"/><rect x="0.8" y="0.8" width="9.4" height="1.2" fill="#7ba7f0"/><path d="M1 5.6H10M1 7.6H10M3.8 3.6V9M7.1 3.6V9" stroke="#f4f7fc" stroke-width="0.8"/><path d="M0.3 9.7H10.7" stroke="#6f7fa3" stroke-width="0.8"/></svg>
<span id="t34" class="tx" style="left:104.70px;top:496px;font-size:10.6px;line-height:14px;color:#1a1a1a;transform:scaleX(0.8599);">dbo.SAT_MEMBERSHIP_PLAN_VALUATION</span>
<svg class="abs" style="left:74.70px;top:514.82px" width="7.8" height="7.8" viewBox="0 0 9 9"><rect x="0.5" y="0.5" width="8" height="8" rx="1" fill="#fcfcfc" stroke="#9b9b9b"/><path d="M1.7 4.5h5.6" stroke="#3550a0" stroke-width="1.05"/><path d="M4.5 1.7v5.6" stroke="#3550a0" stroke-width="1.05"/></svg>
<svg class="abs" style="left:89.00px;top:512.52px" width="10.2" height="9.3" viewBox="0 0 11 10"><rect x="0.5" y="0.5" width="10" height="9" fill="#d3dcec" stroke="#8798bd" stroke-width="0.9"/><rect x="0.5" y="0.5" width="10" height="3" fill="#4f86e4"/><rect x="0.8" y="0.8" width="9.4" height="1.2" fill="#7ba7f0"/><path d="M1 5.6H10M1 7.6H10M3.8 3.6V9M7.1 3.6V9" stroke="#f4f7fc" stroke-width="0.8"/><path d="M0.3 9.7H10.7" stroke="#6f7fa3" stroke-width="0.8"/></svg>
<span id="t35" class="tx" style="left:104.70px;top:511px;font-size:10.6px;line-height:14px;color:#1a1a1a;transform:scaleX(0.8793);">dbo.SAT_SEGMENT</span>
</div>
<div class="abs" style="left:1.00px;top:514.80px;width:337.00px;height:3.20px;background:#30446a"></div>
<svg class="abs" style="left:0;top:0" width="340" height="300" viewBox="0 0 340 300"><path d="M39.9 190.4C39.9 188.6 40.3 186.4 41.4 184.6C42.5 182.8 43.5 181.5 46.4 179.6C49.3 177.7 54.6 175.2 58.7 173.4C62.8 171.7 67.0 170.2 71.1 169.1C75.2 168.0 79.3 167.3 83.4 166.6C87.5 165.9 91.7 165.3 95.8 164.8C99.9 164.3 104.0 163.9 108.1 163.6C112.2 163.2 116.8 162.9 120.5 162.7C124.2 162.5 126.4 162.4 130.0 162.3C133.6 162.2 137.8 161.9 142.0 161.9C146.2 161.9 150.3 162.0 155.0 162.3C159.7 162.6 165.4 163.2 170.0 163.7C174.6 164.2 178.3 164.7 182.4 165.3C186.5 165.9 190.6 166.6 194.7 167.4C198.8 168.2 203.0 169.1 207.1 170.2C211.2 171.3 215.3 172.4 219.4 173.9C223.5 175.4 228.5 177.4 231.8 178.9C235.1 180.4 237.2 181.8 239.2 183.2C241.1 184.6 242.6 186.3 243.5 187.5C244.4 188.7 244.7 189.4 244.7 190.6C244.7 191.8 244.4 193.3 243.5 194.9C242.6 196.5 241.1 198.2 239.2 199.9C237.2 201.6 235.1 203.1 231.8 204.8C228.5 206.6 223.5 208.9 219.4 210.4C215.3 211.9 211.2 212.8 207.1 213.8C203.0 214.8 198.8 215.7 194.7 216.5C190.6 217.3 186.5 217.9 182.4 218.4C178.3 218.9 174.6 219.2 170.0 219.4C165.4 219.6 159.6 219.6 155.0 219.6C150.4 219.6 146.7 219.6 142.5 219.5C138.3 219.4 133.7 219.4 130.0 219.2C126.3 219.0 124.2 218.8 120.5 218.5C116.8 218.2 112.2 218.0 108.1 217.6C104.0 217.2 99.9 216.7 95.8 216.1C91.7 215.5 87.5 214.9 83.4 214.2C79.3 213.5 75.2 212.8 71.1 211.7C67.0 210.6 62.8 209.2 58.7 207.4C54.6 205.6 49.3 202.6 46.4 200.6C43.5 198.6 42.5 197.4 41.4 195.7C40.3 194.0 39.9 192.2 39.9 190.4Z" fill="none" stroke="#ee1c25" stroke-width="1.25"/></svg>
</div>
<div id="document">
<div class="abs" style="left:340.00px;top:19.20px;width:681.50px;height:3.00px;background:#cdd6e6"></div>
<div class="abs" style="left:340.00px;top:3.30px;width:196.80px;height:18.70px;background:linear-gradient(#ffffff,#f3f5f9 50%,#d5dcea);border-radius:2px 2px 0 0"></div>
<span id="t36" class="tx" style="left:343.30px;top:6px;font-size:10.4px;line-height:14px;color:#1e1e1e;transform:scaleX(0.8775);">SQLQuery2.sql - BIS...OX.master (sa (56))</span>
<svg class="abs" style="left:525.5px;top:8.2px" width="8" height="7" viewBox="0 0 8 7"><path d="M0.6 0.3L7.4 6.7M7.4 0.3L0.6 6.7" stroke="#6a7180" stroke-width="1.05"/></svg>
<span id="t37" class="tx" style="left:541.20px;top:6px;font-size:10.4px;line-height:14px;color:#ffffff;transform:scaleX(0.8747);">SQLQuery1.sql - BIS...story_Area (sa (51))*</span>
<svg class="abs" style="left:1010.3px;top:11px" width="7" height="4" viewBox="0 0 7 4"><path d="M0 0H7L3.5 3.8Z" fill="#fff"/></svg>
<div class="abs" style="left:340.00px;top:22.00px;width:681.50px;height:232.00px;background:#fff"></div>
<div class="abs" style="left:341.00px;top:22.00px;width:12.60px;height:232.00px;background:#f0f0f0"></div>
<div class="abs" style="left:1008.00px;top:22.00px;width:13.50px;height:232.00px;background:#f0f0f0"></div>
<div class="abs" style="left:1008.00px;top:50.00px;width:13.50px;height:135.20px;background:#cdcdcd"></div>
<div class="abs" style="left:1008.00px;top:22.00px;width:13.50px;height:14.20px;background:#e3e9f4;border:1px solid #c2cde0"></div>
<svg class="abs" style="left:1010px;top:24.5px" width="10" height="10" viewBox="0 0 10 10"><path d="M0.5 4.1H9.5M0.5 5.9H9.5" stroke="#111" stroke-width="0.7"/><path d="M5 0.3L6.8 2.4H3.2ZM5 9.7L6.8 7.6H3.2Z" fill="#111"/><path d="M5 1V9" stroke="#111" stroke-width="0.7"/></svg>
<svg class="abs" style="left:1011.5px;top:41.5px" width="7" height="4" viewBox="0 0 7 4"><path d="M0.5 3.7L3.5 0.7L6.5 3.7" fill="none" stroke="#a0a0a0" stroke-width="1"/></svg>
<svg class="abs" style="left:1011.3px;top:245px" width="7" height="4" viewBox="0 0 7 4"><path d="M0.5 0.3L3.5 3.3L6.5 0.3" fill="none" stroke="#606060" stroke-width="1.3"/></svg>
<span id="t38" class="tx mono" style="left:371.00px;top:23px;font-size:9.8px;line-height:13px;color:#000;letter-spacing:-0.191px;white-space:pre;"><span class="cm">/****** Script for SelectTopNRows command from SSMS  ******/</span></span>
<span id="t39" class="tx mono" style="left:371.00px;top:36px;font-size:9.8px;line-height:13px;color:#000;letter-spacing:-0.191px;white-space:pre;"><span class="kw">SELECT</span> <span class="kw">TOP</span> 1000 [CUSTOMER_HSH]</span>
<span id="t40" class="tx mono" style="left:405.14px;top:49px;font-size:9.8px;line-height:13px;color:#000;letter-spacing:-0.191px;white-space:pre;"><span class="gr">,</span>[ETL_INSERT_RUN_ID]</span>
<span id="t41" class="tx mono" style="left:405.14px;top:62px;font-size:9.8px;line-height:13px;color:#000;letter-spacing:-0.191px;white-space:pre;"><span class="gr">,</span>[LOAD_DATETIME]</span>
<span id="t42" class="tx mono" style="left:405.14px;top:75px;font-size:9.8px;line-height:13px;color:#000;letter-spacing:-0.191px;white-space:pre;"><span class="gr">,</span>[RECORD_SOURCE]</span>
<span id="t43" class="tx mono" style="left:405.14px;top:88px;font-size:9.8px;line-height:13px;color:#000;letter-spacing:-0.191px;white-space:pre;"><span class="gr">,</span>[CUSTOMER_ID]</span>
<span id="t44" class="tx mono" style="left:405.14px;top:101px;font-size:9.8px;line-height:13px;color:#000;letter-spacing:-0.191px;white-space:pre;"><span class="gr">,</span>[CONTACT_NUMBER]</span>
<span id="t45" class="tx mono" style="left:382.38px;top:114px;font-size:9.8px;line-height:13px;color:#000;letter-spacing:-0.191px;white-space:pre;"><span class="kw">FROM</span> [EDW_200_Integration_Layer]<span class="gr">.</span>[dbo]<span class="gr">.</span>[HUB_CUSTOMER]</span>
<svg class="abs" style="left:362px;top:38.3px" width="9" height="86" viewBox="0 0 9 86"><rect x="0.5" y="0.5" width="7" height="7" fill="#fff" stroke="#a0a0a0" stroke-width="0.8"/><path d="M2 4H6" stroke="#444" stroke-width="0.8"/><path d="M4 8V84.5H8" fill="none" stroke="#8f8f8f" stroke-width="0.8"/></svg>
<div class="abs" style="left:340.00px;top:254.00px;width:681.50px;height:240.50px;background:#f0f0f0"></div>
<div class="abs" style="left:340.00px;top:254.40px;width:48.30px;height:10.80px;background:#fff"></div>
<span id="t46" class="tx" style="left:342.90px;top:255px;font-size:9.8px;line-height:14px;color:#111;transform:scaleX(0.8999);">100 %</span>
<svg class="abs" style="left:381.6px;top:259.3px" width="5" height="3" viewBox="0 0 5 3"><path d="M0 0H5L2.5 2.8Z" fill="#222"/></svg>
<svg class="abs" style="left:393.7px;top:258px" width="4" height="6" viewBox="0 0 4 6"><path d="M3.6 0.4L0.6 3L3.6 5.6" fill="none" stroke="#c3c3c3" stroke-width="1"/></svg>
<svg class="abs" style="left:999px;top:258px" width="4" height="6" viewBox="0 0 4 6"><path d="M0.4 0.4L3.4 3L0.4 5.6" fill="none" stroke="#c3c3c3" stroke-width="1"/></svg>
<div class="abs" style="left:1008.00px;top:254.00px;width:13.50px;height:13.00px;background:#fff"></div>
<div class="abs" style="left:399.00px;top:272.30px;width:63.40px;height:16.50px;background:#f0f0f0;border:1px solid #bcbcbc;border-bottom:none"></div>
<div class="abs" style="left:340.00px;top:271.20px;width:58.90px;height:18.60px;background:#fff;border:1px solid #b4b4b4;border-left-color:#e6e6e6;border-bottom:none"></div>
<svg class="abs" style="left:347px;top:274px" width="12" height="11" viewBox="0 0 12 11"><rect x="0.5" y="0.5" width="11" height="10" fill="#f4f7fc" stroke="#8796b5"/><rect x="0.5" y="0.5" width="11" height="2.8" fill="#5b8fe6"/><path d="M1 5.5H11M1 8H11M4.2 3.5V10M7.8 3.5V10" stroke="#a9b6d0" stroke-width="0.8"/></svg>
<span id="t47" class="tx" style="left:364.50px;top:274px;font-size:10.4px;line-height:14px;color:#111;transform:scaleX(0.8022);">Results</span>
<svg class="abs" style="left:403.2px;top:274.5px" width="12" height="13" viewBox="0 0 12 13"><rect x="0.5" y="0.5" width="6" height="9" fill="#eef2fa" stroke="#7f8db0" stroke-width="0.8"/><path d="M1.5 2.5H5.5M1.5 4.5H5.5M1.5 6.5H5.5" stroke="#6c9ae0" stroke-width="0.8"/><path d="M5 4.5H9L11.5 7V12.5H5Z" fill="#fff" stroke="#7f8db0" stroke-width="0.8"/><rect x="6.2" y="7.5" width="2" height="2" fill="#4fa84f"/><rect x="8.6" y="9.5" width="2" height="2" fill="#e0564c"/><rect x="6.2" y="10" width="2" height="1.6" fill="#e8c54c"/></svg>
<span id="t48" class="tx" style="left:420.70px;top:275px;font-size:10.4px;line-height:14px;color:#111;transform:scaleX(0.8108);">Messages</span>
<div class="abs" style="left:343.00px;top:289.20px;width:677.00px;height:202.30px;background:#fff;border:1px solid #acacac"></div>
<div class="abs" style="left:344.00px;top:290.00px;width:673.00px;height:14.60px;background:#f9fafd"></div>
<div class="abs" style="left:344.00px;top:290.00px;width:25.50px;height:92.85px;background:#f9fafd"></div>
<div class="abs" style="left:344.00px;top:304.10px;width:673.00px;height:1.00px;background:#e6ecf5"></div>
<div class="abs" style="left:344.00px;top:319.75px;width:673.00px;height:1.00px;background:#e6ecf5"></div>
<div class="abs" style="left:344.00px;top:335.40px;width:673.00px;height:1.00px;background:#e6ecf5"></div>
<div class="abs" style="left:344.00px;top:351.05px;width:673.00px;height:1.00px;background:#e6ecf5"></div>
<div class="abs" style="left:344.00px;top:366.70px;width:673.00px;height:1.00px;background:#e6ecf5"></div>
<div class="abs" style="left:344.00px;top:382.35px;width:673.00px;height:1.00px;background:#e6ecf5"></div>
<div class="abs" style="left:369.00px;top:290.00px;width:1.00px;height:92.85px;background:#e6ecf5"></div>
<div class="abs" style="left:514.30px;top:290.00px;width:1.00px;height:92.85px;background:#e6ecf5"></div>
<div class="abs" style="left:620.00px;top:290.00px;width:1.00px;height:92.85px;background:#e6ecf5"></div>
<div class="abs" style="left:750.00px;top:290.00px;width:1.00px;height:92.85px;background:#e6ecf5"></div>
<div class="abs" style="left:845.80px;top:290.00px;width:1.00px;height:92.85px;background:#e6ecf5"></div>
<div class="abs" style="left:923.70px;top:290.00px;width:1.00px;height:92.85px;background:#e6ecf5"></div>
<div class="abs" style="left:1016.50px;top:290.00px;width:1.00px;height:92.85px;background:#e6ecf5"></div>
<div class="abs" style="left:370.00px;top:305.20px;width:144.60px;height:15.60px;background:#f0f0f0;border:1px dotted #333"></div>
<span id="t49" class="tx" style="left:373.50px;top:292px;font-size:10.4px;line-height:14px;color:#111;transform:scaleX(0.8471);">CUSTOMER_HSH</span>
<span id="t50" class="tx" style="left:519.00px;top:292px;font-size:10.4px;line-height:14px;color:#111;transform:scaleX(0.8581);">ETL_INSERT_RUN_ID</span>
<span id="t51" class="tx" style="left:624.60px;top:292px;font-size:10.4px;line-height:14px;color:#111;transform:scaleX(0.8574);">LOAD_DATETIME</span>
<span id="t52" class="tx" style="left:755.20px;top:292px;font-size:10.4px;line-height:14px;color:#111;transform:scaleX(0.8251);">RECORD_SOURCE</span>
<span id="t53" class="tx" style="left:850.00px;top:292px;font-size:10.4px;line-height:14px;color:#111;transform:scaleX(0.8416);">CUSTOMER_ID</span>
<span id="t54" class="tx" style="left:927.90px;top:292px;font-size:10.4px;line-height:14px;color:#111;transform:scaleX(0.8507);">CONTACT_NUMBER</span>
<span id="t55" class="tx" style="left:349.50px;top:307px;font-size:10.4px;line-height:14px;color:#111;transform:scaleX(0.8303);">1</span>
<span id="t56" class="tx" style="left:375.80px;top:307px;font-size:10.4px;line-height:14px;color:#111;transform:scaleX(0.8287);">52C4BC6DB6F183C735B09D47...</span>
<span id="t57" class="tx" style="left:520.00px;top:307px;font-size:10.4px;line-height:14px;color:#111;transform:scaleX(0.8108);">-1</span>
<span id="t58" class="tx" style="left:626.70px;top:307px;font-size:10.4px;line-height:14px;color:#111;transform:scaleX(0.8375);">2015-01-16 09:18:05.3570000</span>
<span id="t59" class="tx" style="left:757.30px;top:307px;font-size:10.4px;line-height:14px;color:#111;transform:scaleX(0.8140);">PROFILER</span>
<span id="t60" class="tx" style="left:852.30px;top:307px;font-size:10.4px;line-height:14px;color:#111;transform:scaleX(0.8418);">235892</span>
<span id="t61" class="tx" style="left:930.30px;top:307px;font-size:10.4px;line-height:14px;color:#111;transform:scaleX(0.8476);">53255</span>
<span id="t62" class="tx" style="left:349.50px;top:323px;font-size:10.4px;line-height:14px;color:#111;transform:scaleX(0.8303);">2</span>
<span id="t63" class="tx" style="left:375.80px;top:323px;font-size:10.4px;line-height:14px;color:#111;transform:scaleX(0.8353);">CBA1B0308FE19F4DE6656A5F...</span>
<span id="t64" class="tx" style="left:520.00px;top:323px;font-size:10.4px;line-height:14px;color:#111;transform:scaleX(0.8108);">-1</span>
<span id="t65" class="tx" style="left:626.70px;top:323px;font-size:10.4px;line-height:14px;color:#111;transform:scaleX(0.8375);">2015-01-16 09:18:05.3570000</span>
<span id="t66" class="tx" style="left:757.30px;top:323px;font-size:10.4px;line-height:14px;color:#111;transform:scaleX(0.8140);">PROFILER</span>
<span id="t67" class="tx" style="left:852.30px;top:323px;font-size:10.4px;line-height:14px;color:#111;transform:scaleX(0.8418);">258279</span>
<span id="t68" class="tx" style="left:930.30px;top:323px;font-size:10.4px;line-height:14px;color:#111;transform:scaleX(0.8476);">41234</span>
<span id="t69" class="tx" style="left:349.50px;top:339px;font-size:10.4px;line-height:14px;color:#111;transform:scaleX(0.8303);">3</span>
<span id="t70" class="tx" style="left:375.80px;top:339px;font-size:10.4px;line-height:14px;color:#111;transform:scaleX(0.8287);">90C4344FD1FF042F42B898099...</span>
<span id="t71" class="tx" style="left:520.00px;top:339px;font-size:10.4px;line-height:14px;color:#111;transform:scaleX(0.8108);">-1</span>
<span id="t72" class="tx" style="left:626.70px;top:339px;font-size:10.4px;line-height:14px;color:#111;transform:scaleX(0.8375);">2015-01-16 09:18:05.3570000</span>
<span id="t73" class="tx" style="left:757.30px;top:339px;font-size:10.4px;line-height:14px;color:#111;transform:scaleX(0.8140);">PROFILER</span>
<span id="t74" class="tx" style="left:852.30px;top:339px;font-size:10.4px;line-height:14px;color:#111;transform:scaleX(0.8418);">321799</span>
<span id="t75" class="tx" style="left:930.30px;top:339px;font-size:10.4px;line-height:14px;color:#111;transform:scaleX(0.8476);">23555</span>
<span id="t76" class="tx" style="left:349.50px;top:354px;font-size:10.4px;line-height:14px;color:#111;transform:scaleX(0.8303);">4</span>
<span id="t77" class="tx" style="left:375.80px;top:354px;font-size:10.4px;line-height:14px;color:#111;transform:scaleX(0.8485);">FA110AE6B8968AE698BB8702...</span>
<span id="t78" class="tx" style="left:520.00px;top:354px;font-size:10.4px;line-height:14px;color:#111;transform:scaleX(0.8108);">-1</span>
<span id="t79" class="tx" style="left:626.70px;top:354px;font-size:10.4px;line-height:14px;color:#111;transform:scaleX(0.8375);">2015-01-16 09:18:05.3570000</span>
<span id="t80" class="tx" style="left:757.30px;top:354px;font-size:10.4px;line-height:14px;color:#111;transform:scaleX(0.8140);">PROFILER</span>
<span id="t81" class="tx" style="left:852.30px;top:354px;font-size:10.4px;line-height:14px;color:#111;transform:scaleX(0.8418);">683492</span>
<span id="t82" class="tx" style="left:930.30px;top:354px;font-size:10.4px;line-height:14px;color:#111;transform:scaleX(0.8476);">41234</span>
<span id="t83" class="tx" style="left:349.50px;top:370px;font-size:10.4px;line-height:14px;color:#111;transform:scaleX(0.8303);">5</span>
<span id="t84" class="tx" style="left:375.80px;top:370px;font-size:10.4px;line-height:14px;color:#111;transform:scaleX(0.8287);">A9B22A080132CA0E302269EC...</span>
<span id="t85" class="tx" style="left:520.00px;top:370px;font-size:10.4px;line-height:14px;color:#111;transform:scaleX(0.8108);">-1</span>
<span id="t86" class="tx" style="left:626.70px;top:370px;font-size:10.4px;line-height:14px;color:#111;transform:scaleX(0.8375);">2015-01-16 09:18:05.3570000</span>
<span id="t87" class="tx" style="left:757.30px;top:370px;font-size:10.4px;line-height:14px;color:#111;transform:scaleX(0.8140);">PROFILER</span>
<span id="t88" class="tx" style="left:852.30px;top:370px;font-size:10.4px;line-height:14px;color:#111;transform:scaleX(0.8418);">885325</span>
<span id="t89" class="tx" style="left:930.30px;top:370px;font-size:10.4px;line-height:14px;color:#111;transform:scaleX(0.8476);">89235</span>
<div class="abs" style="left:344.00px;top:477.00px;width:674.00px;height:12.40px;background:#f0f0f0"></div>
<div class="abs" style="left:358.20px;top:477.00px;width:637.80px;height:12.40px;background:#cdcdcd"></div>
<svg class="abs" style="left:348px;top:480px" width="5" height="7" viewBox="0 0 5 7"><path d="M4.4 0.5L1 3.5L4.4 6.5" fill="none" stroke="#404040" stroke-width="1.4"/></svg>
<svg class="abs" style="left:1008.5px;top:480px" width="5" height="7" viewBox="0 0 5 7"><path d="M0.6 0.5L4 3.5L0.6 6.5" fill="none" stroke="#404040" stroke-width="1.4"/></svg>
<div class="abs" style="left:340.00px;top:491.50px;width:681.50px;height:3.20px;background:#f0f0f0"></div>
<div class="abs" style="left:340.00px;top:494.50px;width:681.50px;height:18.60px;background:#f0e68c"></div>
<div class="abs" style="left:340.00px;top:513.00px;width:681.50px;height:2.50px;background:#c4cee0"></div>
<svg class="abs" style="left:342px;top:497.3px" width="14" height="14" viewBox="0 0 14 14"><defs><radialGradient id="gc" cx=".4" cy=".3" r=".8"><stop offset="0" stop-color="#7fd07a"/><stop offset="1" stop-color="#2c8d33"/></radialGradient></defs><circle cx="6.8" cy="6.8" r="6.4" fill="url(#gc)" stroke="#2a7a2f" stroke-width="0.6"/><path d="M3.6 7L6 9.4L10.2 4.6" fill="none" stroke="#fff" stroke-width="1.7"/></svg>
<span id="t90" class="tx" style="left:358.90px;top:498px;font-size:10.4px;line-height:14px;color:#1e1e1e;transform:scaleX(0.9161);">Query executed successfully.</span>
<div class="abs" style="left:695.50px;top:497.50px;width:1.00px;height:13.00px;background:#fbf6cf"></div>
<div class="abs" style="left:850.80px;top:497.50px;width:1.00px;height:13.00px;background:#fbf6cf"></div>
<div class="abs" style="left:889.50px;top:497.50px;width:1.00px;height:13.00px;background:#fbf6cf"></div>
<div class="abs" style="left:928.70px;top:497.50px;width:1.00px;height:13.00px;background:#fbf6cf"></div>
<div class="abs" style="left:974.10px;top:497.50px;width:1.00px;height:13.00px;background:#fbf6cf"></div>
<span id="t91" class="tx" style="left:700.80px;top:498px;font-size:10.4px;line-height:14px;color:#1e1e1e;transform:scaleX(0.8080);">BISERVER\BISERVER_SANDBOX (...</span>
<span id="t92" class="tx" style="left:856.40px;top:498px;font-size:10.4px;line-height:14px;color:#1e1e1e;transform:scaleX(0.8410);">sa (56)</span>
<span id="t93" class="tx" style="left:895.00px;top:498px;font-size:10.4px;line-height:14px;color:#1e1e1e;transform:scaleX(0.9098);">master</span>
<span id="t94" class="tx" style="left:934.60px;top:498px;font-size:10.4px;line-height:14px;color:#1e1e1e;transform:scaleX(0.8306);">00:00:00</span>
<span id="t95" class="tx" style="left:979.60px;top:498px;font-size:10.4px;line-height:14px;color:#1e1e1e;transform:scaleX(0.8788);">5 rows</span>
</div>
</body></html>
